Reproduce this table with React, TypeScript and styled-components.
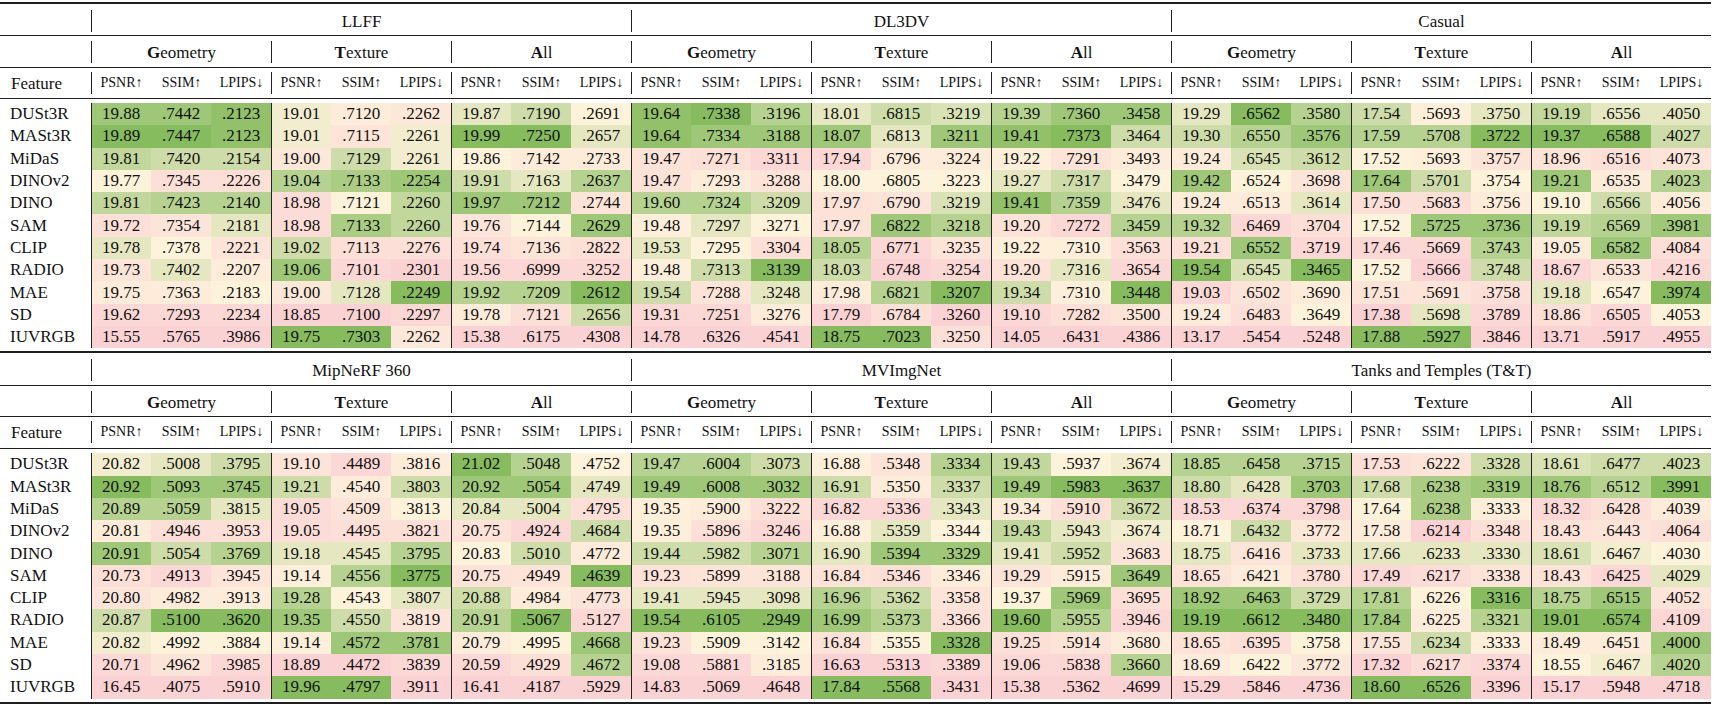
import React from "react";
import styled, { createGlobalStyle } from "styled-components";

const GlobalStyle = createGlobalStyle`
  * { box-sizing: border-box; }
  body { margin: 0; background: #ffffff; }
`;

const FEATURES = ["DUSt3R", "MASt3R", "MiDaS", "DINOv2", "DINO", "SAM", "CLIP", "RADIO", "MAE", "SD", "IUVRGB"];

type Dataset = { name: string; rows: string[] };

const TOP: Dataset[] = [
  {
    name: "LLFF",
    rows: [
      "19.88 .7442 .2123 19.01 .7120 .2262 19.87 .7190 .2691",
      "19.89 .7447 .2123 19.01 .7115 .2261 19.99 .7250 .2657",
      "19.81 .7420 .2154 19.00 .7129 .2261 19.86 .7142 .2733",
      "19.77 .7345 .2226 19.04 .7133 .2254 19.91 .7163 .2637",
      "19.81 .7423 .2140 18.98 .7121 .2260 19.97 .7212 .2744",
      "19.72 .7354 .2181 18.98 .7133 .2260 19.76 .7144 .2629",
      "19.78 .7378 .2221 19.02 .7113 .2276 19.74 .7136 .2822",
      "19.73 .7402 .2207 19.06 .7101 .2301 19.56 .6999 .3252",
      "19.75 .7363 .2183 19.00 .7128 .2249 19.92 .7209 .2612",
      "19.62 .7293 .2234 18.85 .7100 .2297 19.78 .7121 .2656",
      "15.55 .5765 .3986 19.75 .7303 .2262 15.38 .6175 .4308",
    ],
  },
  {
    name: "DL3DV",
    rows: [
      "19.64 .7338 .3196 18.01 .6815 .3219 19.39 .7360 .3458",
      "19.64 .7334 .3188 18.07 .6813 .3211 19.41 .7373 .3464",
      "19.47 .7271 .3311 17.94 .6796 .3224 19.22 .7291 .3493",
      "19.47 .7293 .3288 18.00 .6805 .3223 19.27 .7317 .3479",
      "19.60 .7324 .3209 17.97 .6790 .3219 19.41 .7359 .3476",
      "19.48 .7297 .3271 17.97 .6822 .3218 19.20 .7272 .3459",
      "19.53 .7295 .3304 18.05 .6771 .3235 19.22 .7310 .3563",
      "19.48 .7313 .3139 18.03 .6748 .3254 19.20 .7316 .3654",
      "19.54 .7288 .3248 17.98 .6821 .3207 19.34 .7310 .3448",
      "19.31 .7251 .3276 17.79 .6784 .3260 19.10 .7282 .3500",
      "14.78 .6326 .4541 18.75 .7023 .3250 14.05 .6431 .4386",
    ],
  },
  {
    name: "Casual",
    rows: [
      "19.29 .6562 .3580 17.54 .5693 .3750 19.19 .6556 .4050",
      "19.30 .6550 .3576 17.59 .5708 .3722 19.37 .6588 .4027",
      "19.24 .6545 .3612 17.52 .5693 .3757 18.96 .6516 .4073",
      "19.42 .6524 .3698 17.64 .5701 .3754 19.21 .6535 .4023",
      "19.24 .6513 .3614 17.50 .5683 .3756 19.10 .6566 .4056",
      "19.32 .6469 .3704 17.52 .5725 .3736 19.19 .6569 .3981",
      "19.21 .6552 .3719 17.46 .5669 .3743 19.05 .6582 .4084",
      "19.54 .6545 .3465 17.52 .5666 .3748 18.67 .6533 .4216",
      "19.03 .6502 .3690 17.51 .5691 .3758 19.18 .6547 .3974",
      "19.24 .6483 .3649 17.38 .5698 .3789 18.86 .6505 .4053",
      "13.17 .5454 .5248 17.88 .5927 .3846 13.71 .5917 .4955",
    ],
  },
];

const BOTTOM: Dataset[] = [
  {
    name: "MipNeRF 360",
    rows: [
      "20.82 .5008 .3795 19.10 .4489 .3816 21.02 .5048 .4752",
      "20.92 .5093 .3745 19.21 .4540 .3803 20.92 .5054 .4749",
      "20.89 .5059 .3815 19.05 .4509 .3813 20.84 .5004 .4795",
      "20.81 .4946 .3953 19.05 .4495 .3821 20.75 .4924 .4684",
      "20.91 .5054 .3769 19.18 .4545 .3795 20.83 .5010 .4772",
      "20.73 .4913 .3945 19.14 .4556 .3775 20.75 .4949 .4639",
      "20.80 .4982 .3913 19.28 .4543 .3807 20.88 .4984 .4773",
      "20.87 .5100 .3620 19.35 .4550 .3819 20.91 .5067 .5127",
      "20.82 .4992 .3884 19.14 .4572 .3781 20.79 .4995 .4668",
      "20.71 .4962 .3985 18.89 .4472 .3839 20.59 .4929 .4672",
      "16.45 .4075 .5910 19.96 .4797 .3911 16.41 .4187 .5929",
    ],
  },
  {
    name: "MVImgNet",
    rows: [
      "19.47 .6004 .3073 16.88 .5348 .3334 19.43 .5937 .3674",
      "19.49 .6008 .3032 16.91 .5350 .3337 19.49 .5983 .3637",
      "19.35 .5900 .3222 16.82 .5336 .3343 19.34 .5910 .3672",
      "19.35 .5896 .3246 16.88 .5359 .3344 19.43 .5943 .3674",
      "19.44 .5982 .3071 16.90 .5394 .3329 19.41 .5952 .3683",
      "19.23 .5899 .3188 16.84 .5346 .3346 19.29 .5915 .3649",
      "19.41 .5945 .3098 16.96 .5362 .3358 19.37 .5969 .3695",
      "19.54 .6105 .2949 16.99 .5373 .3366 19.60 .5955 .3946",
      "19.23 .5909 .3142 16.84 .5355 .3328 19.25 .5914 .3680",
      "19.08 .5881 .3185 16.63 .5313 .3389 19.06 .5838 .3660",
      "14.83 .5069 .4648 17.84 .5568 .3431 15.38 .5362 .4699",
    ],
  },
  {
    name: "Tanks and Temples (T&T)",
    rows: [
      "18.85 .6458 .3715 17.53 .6222 .3328 18.61 .6477 .4023",
      "18.80 .6428 .3703 17.68 .6238 .3319 18.76 .6512 .3991",
      "18.53 .6374 .3798 17.64 .6238 .3333 18.32 .6428 .4039",
      "18.71 .6432 .3772 17.58 .6214 .3348 18.43 .6443 .4064",
      "18.75 .6416 .3733 17.66 .6233 .3330 18.61 .6467 .4030",
      "18.65 .6421 .3780 17.49 .6217 .3338 18.43 .6425 .4029",
      "18.92 .6463 .3729 17.81 .6226 .3316 18.75 .6515 .4052",
      "19.19 .6612 .3480 17.84 .6225 .3321 19.01 .6574 .4109",
      "18.65 .6395 .3758 17.55 .6234 .3333 18.49 .6451 .4000",
      "18.69 .6422 .3772 17.32 .6217 .3374 18.55 .6467 .4020",
      "15.29 .5846 .4736 18.60 .6526 .3396 15.17 .5948 .4718",
    ],
  },
];

const GROUPS: { bold: string; rest: string }[] = [
  { bold: "G", rest: "eometry" },
  { bold: "T", rest: "exture" },
  { bold: "A", rest: "ll" },
];
const METRICS = ["PSNR\u2191", "SSIM\u2191", "LPIPS\u2193"];

const GREEN = [134, 188, 94];
const CREAM = [253, 242, 218];
const PINK = [251, 210, 212];

const lerp = (a: number[], b: number[], t: number) =>
  a.map((v, i) => Math.round(v + (b[i] - v) * t));

function colorFor(p: number): string {
  const c = p <= 0.5 ? lerp(GREEN, CREAM, p / 0.5) : lerp(CREAM, PINK, (p - 0.5) / 0.5);
  return `rgb(${c[0]}, ${c[1]}, ${c[2]})`;
}

// 11 x 27 matrix of background colours, ranked per column
function buildColors(datasets: Dataset[]): string[][] {
  const table = FEATURES.map((_, r) =>
    datasets.flatMap((d) => d.rows[r].split(" ").map((s) => parseFloat(s)))
  );
  const out: string[][] = FEATURES.map(() => []);
  for (let c = 0; c < 27; c++) {
    const lowerBetter = c % 3 === 2;
    const col = table.map((row) => row[c]);
    const n = col.length;
    col.forEach((v, r) => {
      let better = 0;
      let equal = 0;
      col.forEach((w) => {
        if (w === v) equal++;
        else if (lowerBetter ? w < v : w > v) better++;
      });
      const rank = better + (equal - 1) / 2;
      out[r][c] = colorFor(rank / (n - 1));
    });
  }
  return out;
}

const Page = styled.div`
  width: 1718px;
  padding-top: 2px;
  font-family: "Liberation Serif", "Times New Roman", "DejaVu Serif", serif;
  color: #111111;
`;

const Block = styled.div`
  display: grid;
  grid-template-columns: 91px repeat(27, 60px);
  width: 1711px;
`;

const Rule = styled.div<{ $h: number; $soft?: boolean }>`
  grid-column: 1 / -1;
  height: ${(p) => p.$h}px;
  background: #1e1e1e;
  box-shadow: ${(p) => (p.$soft ? "0 1px 0 #9a9a9a" : "none")};
`;

const Spacer = styled.div<{ $h: number }>`
  grid-column: 1 / -1;
  height: ${(p) => p.$h}px;
`;

const HeadCell = styled.div<{ $span: number; $h: number; $pad: number }>`
  grid-column: span ${(p) => p.$span};
  height: ${(p) => p.$h}px;
  padding-top: ${(p) => p.$pad}px;
  display: flex;
  align-items: flex-start;
`;

const HeadLabel = styled.div<{ $sep: boolean; $size: number; $left?: boolean }>`
  flex: 1;
  height: 22px;
  display: flex;
  align-items: center;
  justify-content: ${(p) => (p.$left ? "flex-start" : "center")};
  padding-left: ${(p) => (p.$left ? "10px" : "0")};
  border-left: ${(p) => (p.$sep ? "1px solid #222" : "1px solid transparent")};
  font-size: ${(p) => p.$size}px;
  white-space: nowrap;
  line-height: 1;
`;

const Strong = styled.span`
  font-weight: 700;
`;

const NameCell = styled.div`
  height: 22.3px;
  display: flex;
  align-items: center;
  padding-left: 10px;
  font-size: 17px;
  white-space: nowrap;
`;

const DataCell = styled.div<{ $bg: string; $sep: boolean }>`
  height: 22.3px;
  display: flex;
  align-items: center;
  justify-content: center;
  font-size: 17px;
  background: ${(p) => p.$bg};
  box-shadow: ${(p) => (p.$sep ? "inset 1px 0 0 #222" : "none")};
`;

function TableBlock({ datasets, first }: { datasets: Dataset[]; first: boolean }) {
  const colors = buildColors(datasets);
  return (
    <Block>
      {first && <Rule $h={2} />}
      <HeadCell $span={1} $h={first ? 31 : 32} $pad={6} />
      {datasets.map((d) => (
        <HeadCell key={d.name} $span={9} $h={first ? 31 : 32} $pad={6}>
          <HeadLabel $sep $size={17}>{d.name}</HeadLabel>
        </HeadCell>
      ))}
      <Rule $h={1} />
      <HeadCell $span={1} $h={first ? 31 : 30} $pad={5} />
      {datasets.flatMap((d) =>
        GROUPS.map((g) => (
          <HeadCell key={d.name + g.bold} $span={3} $h={first ? 31 : 30} $pad={5}>
            <HeadLabel $sep $size={17}>
              <Strong>{g.bold}</Strong>
              {g.rest}
            </HeadLabel>
          </HeadCell>
        ))
      )}
      <Rule $h={1} />
      <HeadCell $span={1} $h={first ? 30 : 31} $pad={4}>
        <HeadLabel $sep={false} $size={17} $left>
          Feature
        </HeadLabel>
      </HeadCell>
      {Array.from({ length: 27 }, (_, i) => (
        <HeadCell key={"m" + i} $span={1} $h={first ? 30 : 31} $pad={4}>
          <HeadLabel $sep={i % 3 === 0} $size={14}>
            {METRICS[i % 3]}
          </HeadLabel>
        </HeadCell>
      ))}
      <Rule $h={1} />
      <Spacer $h={4} />
      {FEATURES.map((f, r) => {
        const values = datasets.flatMap((d) => d.rows[r].split(" "));
        return (
          <React.Fragment key={f}>
            <NameCell>{f}</NameCell>
            {values.map((v, c) => (
              <DataCell key={c} $bg={colors[r][c]} $sep={c % 3 === 0}>
                {v}
              </DataCell>
            ))}
          </React.Fragment>
        );
      })}
      <Spacer $h={3} />
      <Rule $h={2} $soft={!first} />
    </Block>
  );
}

export default function App() {
  return (
    <Page>
      <GlobalStyle />
      <TableBlock datasets={TOP} first />
      <TableBlock datasets={BOTTOM} first={false} />
    </Page>
  );
}
